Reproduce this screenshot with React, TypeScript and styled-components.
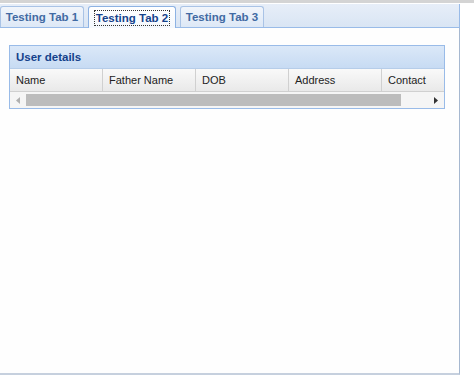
import React from "react";
import styled, { createGlobalStyle } from "styled-components";

const FONT = `"Liberation Sans", Arial, sans-serif`;

const Global = createGlobalStyle`
  html, body { margin: 0; padding: 0; background: #ffffff; }
  body { font-family: ${FONT}; }
`;

const Page = styled.div`
  width: 474px;
  height: 386px;
  box-sizing: border-box;
  border-top: 3px solid #d4d4d4;
  padding-top: 1px;
`;

const TabPanel = styled.div`
  width: 460px;
  display: flex;
  flex-direction: column;
`;

const Strip = styled.div`
  height: 24px;
  display: flex;
  align-items: flex-end;
  gap: 4px;
  background: linear-gradient(#e7eef8, #d9e5f4);
  border-right: 1px solid #99bbe8;
  border-bottom: 1px solid #99bbe8;
  box-sizing: border-box;
`;

const Tab = styled.div<{ $active?: boolean }>`
  box-sizing: border-box;
  display: flex;
  align-items: center;
  justify-content: center;
  white-space: nowrap;
  border: 1px solid ${p => (p.$active ? "#8db2e3" : "#a9c3e6")};
  border-bottom: none;
  border-radius: 3px 3px 0 0;
  background: ${p => (p.$active ? "linear-gradient(#ffffff, #f4f8fd)" : "linear-gradient(#f1f5fb, #dde8f6)")};
  font: bold 11.5px ${FONT};
  color: ${p => (p.$active ? "#15428b" : "#416aa3")};
  margin-bottom: ${p => (p.$active ? "-1px" : "0")};
  height: ${p => (p.$active ? "22px" : "21px")};
  width: ${p => (p.$active ? "88px" : "84px")};
`;

const Focus = styled.span`
  outline: 1px dotted #333;
  padding: 0 1px;
  line-height: 14px;
`;

const Body = styled.div`
  height: 347px;
  box-sizing: border-box;
  border-right: 1px solid #a6b8d0;
  border-bottom: 2px solid #c6d0de;
  background: #fefefe;
  padding: 17px 14px 0 9px;
`;

const Grid = styled.div`
  border: 1px solid #99bbe8;
  display: flex;
  flex-direction: column;
`;

const Header = styled.div`
  height: 23px;
  box-sizing: border-box;
  display: flex;
  align-items: center;
  padding-left: 6px;
  background: linear-gradient(#dbe8f8, #c7dbf3);
  border-bottom: 1px solid #b6cde9;
  font: bold 11.5px ${FONT};
  color: #15428b;
`;

const Cols = styled.div`
  height: 22px;
  display: flex;
  background: linear-gradient(#f9f9f9, #e9e9e9);
  border-bottom: 1px solid #d0d0d0;
  overflow: hidden;
`;

const Col = styled.div<{ $w: number }>`
  flex: 0 0 ${p => p.$w}px;
  box-sizing: border-box;
  border-right: 1px solid #d0d0d0;
  padding-left: 6px;
  display: flex;
  align-items: center;
  white-space: nowrap;
  font: 11px ${FONT};
  color: #222;
`;

const Scroll = styled.div`
  height: 16px;
  display: flex;
  align-items: center;
  background: #f5f5f5;
`;

const Arrow = styled.div`
  flex: 0 0 16px;
  height: 16px;
  display: flex;
  align-items: center;
  justify-content: center;
`;

const Track = styled.div`
  flex: 1;
  height: 16px;
  display: flex;
  align-items: center;
`;

const Thumb = styled.div`
  height: 12px;
  width: 375px;
  background: #bcbcbc;
`;

const columns: [string, number][] = [
  ["Name", 93],
  ["Father Name", 93],
  ["DOB", 93],
  ["Address", 93],
  ["Contact", 93],
];

export default function App() {
  return (
    <>
      <Global />
      <Page>
        <TabPanel>
          <Strip>
            <Tab>Testing Tab 1</Tab>
            <Tab $active>
              <Focus>Testing Tab 2</Focus>
            </Tab>
            <Tab>Testing Tab 3</Tab>
          </Strip>
          <Body>
            <Grid>
              <Header>User details</Header>
              <Cols>
                {columns.map(([t, w]) => (
                  <Col key={t} $w={w}>
                    {t}
                  </Col>
                ))}
              </Cols>
              <Scroll>
                <Arrow>
                  <svg width="4" height="7" viewBox="0 0 4 7">
                    <path d="M4 0 L0 3.5 L4 7 Z" fill="#b0b0b0" />
                  </svg>
                </Arrow>
                <Track>
                  <Thumb />
                </Track>
                <Arrow>
                  <svg width="4" height="7" viewBox="0 0 4 7">
                    <path d="M0 0 L4 3.5 L0 7 Z" fill="#333" />
                  </svg>
                </Arrow>
              </Scroll>
            </Grid>
          </Body>
        </TabPanel>
      </Page>
    </>
  );
}
